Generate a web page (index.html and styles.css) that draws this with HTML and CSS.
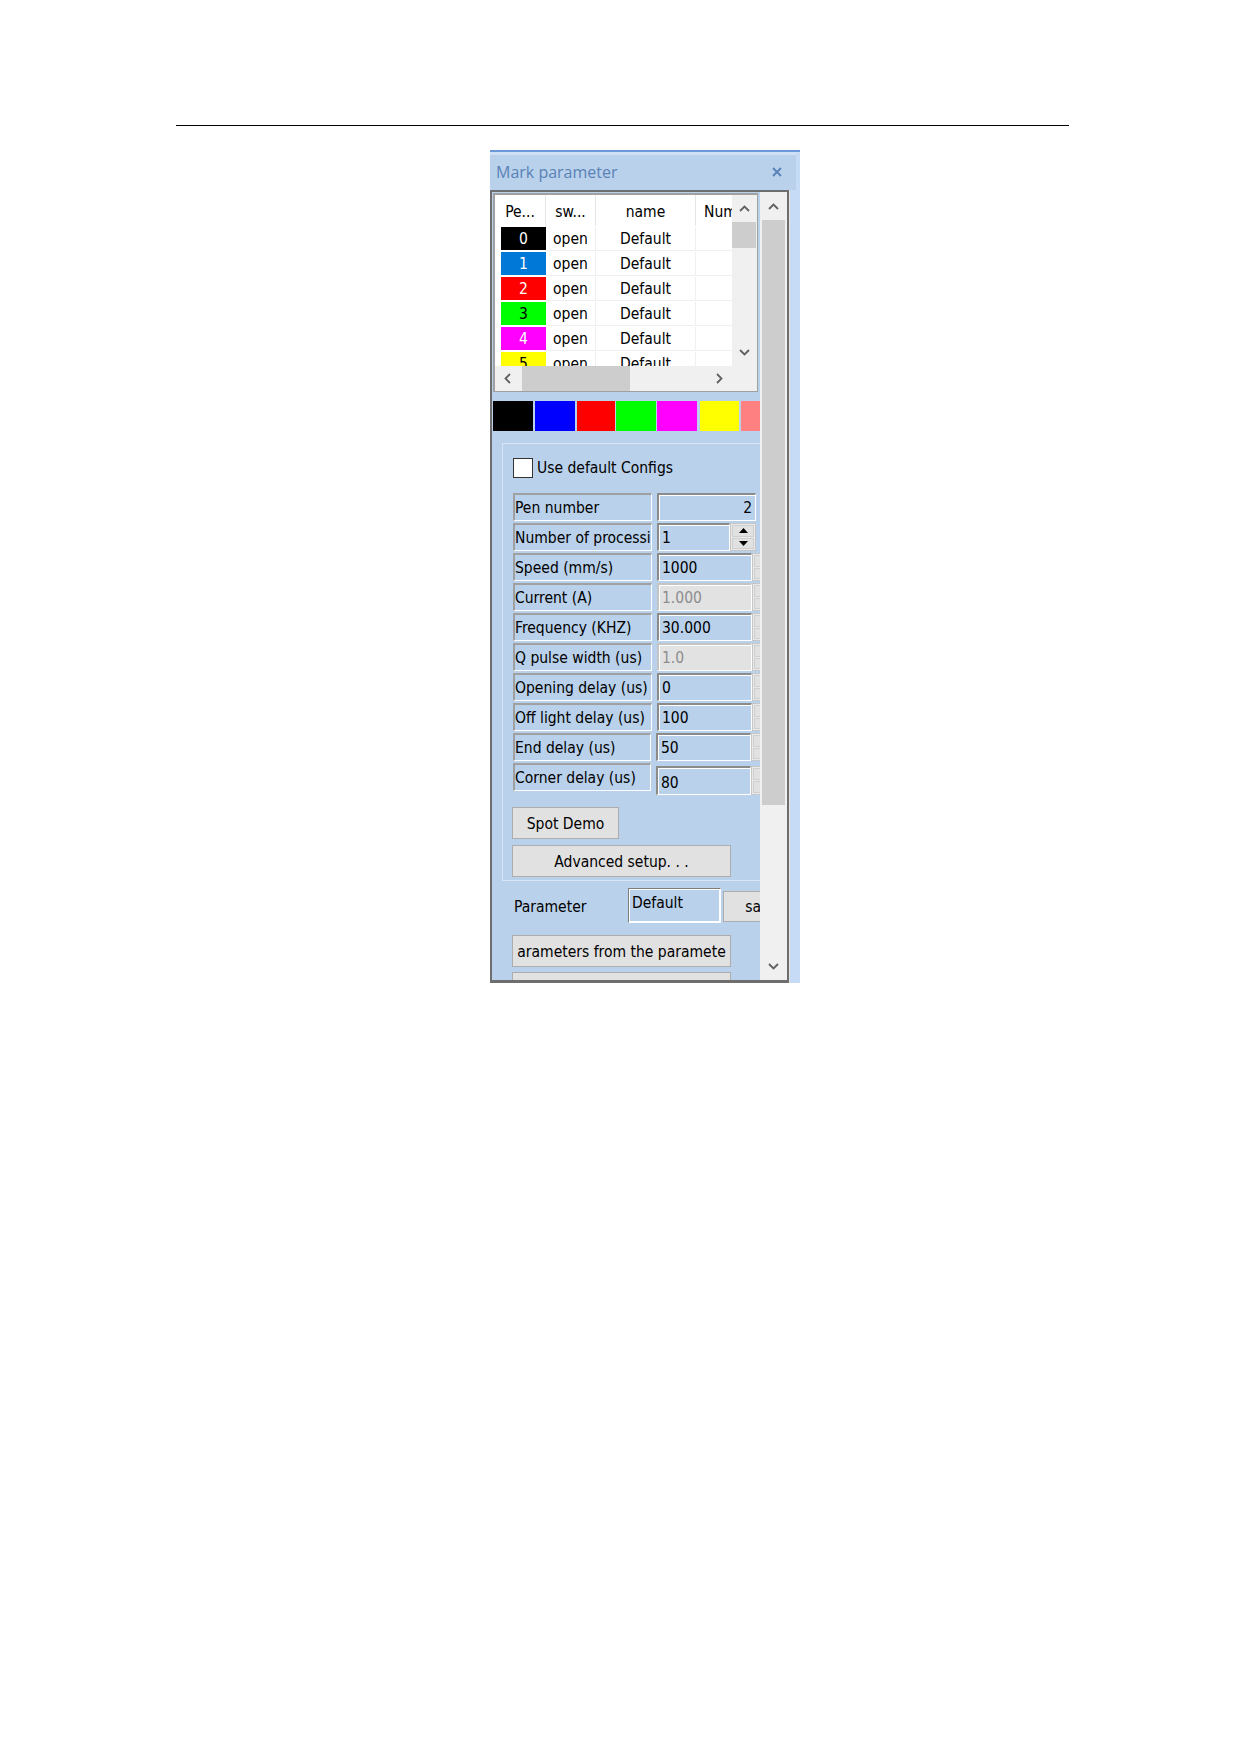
FILE: index.html
```html
<!DOCTYPE html>
<html>
<head>
<meta charset="utf-8">
<title>Mark parameter</title>
<link rel="stylesheet" href="styles.css">
</head>
<body>
<div class="rule"></div>
<div class="win">
  <div class="win-top"></div>
  <div class="title">
    <span class="title-text">Mark parameter</span>
    <svg class="close" width="10" height="10" viewBox="0 0 10 10"><path d="M1 1L9 9M9 1L1 9" stroke="#5b84ba" stroke-width="2" fill="none"/></svg>
  </div>
  <div class="main">
    <div class="panel">
      <div class="content">
        <div class="list">
          <div class="list-top">
            <div class="cols">
              <div class="lrow head">
                <div class="c hc1">Pe...</div><div class="c c2">sw...</div><div class="c c3">name</div><div class="c c4">Num</div>
              </div>
              <div class="lrow"><div class="c c1"><span class="pen p0">0</span></div><div class="c c2">open</div><div class="c c3">Default</div><div class="c c4"></div></div>
              <div class="lrow"><div class="c c1"><span class="pen p1">1</span></div><div class="c c2">open</div><div class="c c3">Default</div><div class="c c4"></div></div>
              <div class="lrow"><div class="c c1"><span class="pen p2">2</span></div><div class="c c2">open</div><div class="c c3">Default</div><div class="c c4"></div></div>
              <div class="lrow"><div class="c c1"><span class="pen p3">3</span></div><div class="c c2">open</div><div class="c c3">Default</div><div class="c c4"></div></div>
              <div class="lrow"><div class="c c1"><span class="pen p4">4</span></div><div class="c c2">open</div><div class="c c3">Default</div><div class="c c4"></div></div>
              <div class="lrow"><div class="c c1"><span class="pen p5">5</span></div><div class="c c2">open</div><div class="c c3">Default</div><div class="c c4"></div></div>
            </div>
            <div class="lvs">
              <div class="arrow up"><svg width="11" height="7" viewBox="0 0 11 7"><path d="M1 6L5.5 1.5L10 6" fill="none" stroke="#606060" stroke-width="1.8"/></svg></div>
              <div class="thumb"></div>
              <div class="track"></div>
              <div class="arrow down"><svg width="11" height="7" viewBox="0 0 11 7"><path d="M1 1L5.5 5.5L10 1" fill="none" stroke="#606060" stroke-width="1.8"/></svg></div>
            </div>
          </div>
          <div class="lhs">
            <div class="arrow"><svg width="7" height="11" viewBox="0 0 7 11"><path d="M6 1L1.5 5.5L6 10" fill="none" stroke="#606060" stroke-width="1.8"/></svg></div>
            <div class="thumb"></div>
            <div class="track"></div>
            <div class="arrow"><svg width="7" height="11" viewBox="0 0 7 11"><path d="M1 1L5.5 5.5L1 10" fill="none" stroke="#606060" stroke-width="1.8"/></svg></div>
            <div class="corner"></div>
          </div>
        </div>

        <div class="swatches">
          <div class="sw s-black"></div>
          <div class="sw s-blue"></div>
          <div class="sw s-red"></div>
          <div class="sw s-green"></div>
          <div class="sw s-magenta"></div>
          <div class="sw s-yellow"></div>
          <div class="sw s-salmon"></div>
        </div>

        <div class="group">
          <div class="check"><span class="box"></span><span>Use default Configs</span></div>
          <div class="fields">
            <div class="frow">
              <div class="flabel">Pen number</div>
              <div class="fval"><div class="field full">2</div></div>
            </div>
            <div class="frow">
              <div class="flabel">Number of processi</div>
              <div class="fval"><div class="field short">1</div>
                <div class="spin"><div class="sb"><svg width="9" height="5" viewBox="0 0 9 5"><path d="M0 5L4.5 0L9 5Z" fill="#000"/></svg></div><div class="sb"><svg width="9" height="5" viewBox="0 0 9 5"><path d="M0 0L4.5 5L9 0Z" fill="#000"/></svg></div></div>
              </div>
            </div>
            <div class="frow">
              <div class="flabel">Speed (mm/s)</div>
              <div class="fval"><div class="field">1000</div><div class="spin"><div class="sb"></div><div class="sb"></div></div></div>
            </div>
            <div class="frow">
              <div class="flabel">Current (A)</div>
              <div class="fval"><div class="field dis">1.000</div><div class="spin"><div class="sb"></div><div class="sb"></div></div></div>
            </div>
            <div class="frow">
              <div class="flabel">Frequency (KHZ)</div>
              <div class="fval"><div class="field">30.000</div><div class="spin"><div class="sb"></div><div class="sb"></div></div></div>
            </div>
            <div class="frow">
              <div class="flabel">Q pulse width (us)</div>
              <div class="fval"><div class="field dis">1.0</div><div class="spin"><div class="sb"></div><div class="sb"></div></div></div>
            </div>
            <div class="frow">
              <div class="flabel">Opening delay (us)</div>
              <div class="fval"><div class="field">0</div><div class="spin"><div class="sb"></div><div class="sb"></div></div></div>
            </div>
            <div class="frow">
              <div class="flabel">Off light delay (us)</div>
              <div class="fval"><div class="field">100</div><div class="spin"><div class="sb"></div><div class="sb"></div></div></div>
            </div>
            <div class="frow">
              <div class="flabel narrow">End delay (us)</div>
              <div class="fval"><div class="field">50</div><div class="spin"><div class="sb"></div><div class="sb"></div></div></div>
            </div>
            <div class="frow corner-row">
              <div class="flabel narrow">Corner delay (us)</div>
              <div class="fval"><div class="field">80</div><div class="spin"><div class="sb"></div><div class="sb"></div></div></div>
            </div>
          </div>
          <div class="btn spot">Spot Demo</div>
          <div class="btn adv">Advanced setup. . .</div>
        </div>

        <div class="param-row">
          <span class="plabel">Parameter</span>
          <div class="pfield">Default</div>
          <div class="btn save">save</div>
        </div>
        <div class="btn wide load">arameters from the paramete</div>
        <div class="btn wide next"></div>
      </div>
      <div class="vs">
        <div class="arrow"><svg width="11" height="7" viewBox="0 0 11 7"><path d="M1 6L5.5 1.5L10 6" fill="none" stroke="#606060" stroke-width="1.8"/></svg></div>
        <div class="thumb"></div>
        <div class="track"></div>
        <div class="arrow"><svg width="11" height="7" viewBox="0 0 11 7"><path d="M1 1L5.5 5.5L10 1" fill="none" stroke="#606060" stroke-width="1.8"/></svg></div>
      </div>
    </div>
    <div class="strip"></div>
  </div>
</div>
</body>
</html>
```

FILE: styles.css
```css
* { box-sizing: border-box; }

body {
  margin: 0;
  background: #fff;
  font-family: "DejaVu Sans Condensed", "Liberation Sans", sans-serif;
  font-size: 15.5px;
  color: #000;
}

.rule {
  margin: 125px 0 0 176px;
  width: 893px;
  height: 1px;
  background: #000;
}

.win {
  margin: 24px 0 0 490px;
  width: 310px;
}

.win-top {
  height: 2px;
  background: #6a9bd8;
}

.title {
  height: 38px;
  border-top: 3px solid #cfe0f5;
  border-right: 4px solid #c6dbf5;
  background: #b9d1ea;
  display: flex;
  align-items: center;
  justify-content: space-between;
  padding: 0 14px 2px 6px;
}

.title-text {
  font-family: "Open Sans", "Liberation Sans", sans-serif;
  font-size: 16px;
  color: #5a82b8;
}

.close { display: block; }

.main {
  display: flex;
  height: 793px;
}

.panel {
  width: 299px;
  flex: none;
  border: 2px solid #6e6e6e;
  border-bottom-width: 3px;
  background: #b9d1ea;
  display: flex;
}

.strip {
  flex: 1;
  background: #c6dbf5;
  border-left: 1px solid #e4e4e4;
}

.content {
  width: 268px;
  flex: none;
  overflow: hidden;
  padding: 1px 0 0 1px;
}

/* panel scrollbar */
.vs {
  width: 27px;
  flex: none;
  background: #f0f0f0;
  display: flex;
  flex-direction: column;
}
.vs .arrow {
  height: 28px;
  flex: none;
  display: flex;
  align-items: center;
  justify-content: center;
}
.vs .thumb {
  height: 585px;
  flex: none;
  margin: 0 2px;
  background: #cdcdcd;
}
.vs .track { flex: 1; }

/* list */
.list {
  width: 265px;
  height: 199px;
  border-style: solid;
  border-color: #a0a0a0;
  border-width: 2px 1px 1px 2px;
  background: #fff;
}
.list-top {
  display: flex;
  height: 171px;
}
.cols {
  width: 237px;
  flex: none;
  overflow: hidden;
}
.lrow {
  display: flex;
  height: 25px;
  padding-top: 1px;
}
.lrow.head { height: 31px; padding-top: 0; }

.c {
  flex: none;
  display: flex;
  align-items: center;
  border-right: 1px solid #f0f0f0;
  border-bottom: 1px solid #f0f0f0;
  white-space: nowrap;
  overflow: hidden;
}
.head .c {
  border-bottom: none;
  border-right-color: #e5e5e5;
  justify-content: center;
  padding-top: 2px;
}
.hc1 { width: 51px; }
.c1 { width: 51px; }
.c2 { width: 50px; padding-left: 7px; }
.c3 { width: 100px; justify-content: center; }
.c4 { width: 60px; }
.head .c2 { padding-left: 0; }
.head .c4 { justify-content: flex-start; padding-left: 8px; }

.lrow .c1 {
  padding-left: 6px;
  border: none;
  align-items: stretch;
}
.pen {
  flex: 1;
  margin-bottom: 1px;
  display: flex;
  align-items: center;
  justify-content: center;
  color: #fff;
}
.p0 { background: #000; }
.p1 { background: #0078d7; }
.p2 { background: #ff0000; }
.p3 { background: #00ff00; color: #000; }
.p4 { background: #ff00ff; }
.p5 { background: #ffff00; color: #000; }

.lvs {
  width: 25px;
  flex: none;
  background: #f0f0f0;
  display: flex;
  flex-direction: column;
}
.lvs .arrow {
  height: 27px;
  flex: none;
  display: flex;
  align-items: center;
  justify-content: center;
}
.lvs .arrow.down { height: 28px; }
.lvs .thumb {
  height: 26px;
  flex: none;
  margin-right: 1px;
  background: #cdcdcd;
}
.lvs .track { flex: 1; }

.lhs {
  display: flex;
  height: 25px;
  background: #f0f0f0;
}
.lhs .arrow {
  width: 25px;
  flex: none;
  display: flex;
  align-items: center;
  justify-content: center;
}
.lhs .thumb {
  width: 108px;
  flex: none;
  margin-left: 2px;
  background: #cdcdcd;
}
.lhs .track { flex: 1; }
.lhs .corner { width: 25px; flex: none; }

/* colour swatches */
.swatches {
  display: flex;
  height: 30px;
  margin-top: 9px;
}
.sw { flex: none; height: 30px; }
.s-black { width: 40px; background: #000; }
.s-blue { width: 40px; margin-left: 2px; background: #0000ff; }
.s-red { width: 38px; margin-left: 2px; background: #ff0000; }
.s-green { width: 40px; margin-left: 1px; background: #00ff00; }
.s-magenta { width: 40px; margin-left: 1px; background: #ff00ff; }
.s-yellow { width: 39px; margin-left: 3px; background: #ffff00; }
.s-salmon { width: 40px; margin-left: 2px; background: #ff8080; }

/* group box */
.group {
  margin: 12px 0 0 9px;
  width: 290px;
  border: 1px solid #d9e5f3;
  border-right: none;
  padding: 14px 0 3px 10px;
}

.check {
  display: flex;
  align-items: center;
  height: 20px;
  gap: 4px;
}
.box {
  width: 20px;
  height: 20px;
  border: 1px solid #333;
  background: #fff;
}

.fields {
  margin-top: 15px;
  display: flex;
  flex-direction: column;
  gap: 2px;
}
.frow {
  display: flex;
  height: 28px;
}
.flabel {
  width: 139px;
  flex: none;
  border-style: solid;
  border-width: 2px 1px 1px 2px;
  border-color: #a0a0a0 #fff #fff #a0a0a0;
  display: flex;
  align-items: center;
  white-space: nowrap;
  overflow: hidden;
}
.flabel.narrow { width: 138px; }

.fval {
  margin-left: 5px;
  display: flex;
  flex: none;
}
.field {
  width: 95px;
  flex: none;
  border-style: solid;
  border-width: 2px 1px 1px 2px;
  border-color: #8b8b8b #fff #fff #8b8b8b;
  box-shadow: inset 1px 1px 0 #fff;
  display: flex;
  align-items: center;
  padding-left: 3px;
  white-space: nowrap;
}
.field.full {
  width: 99px;
  justify-content: flex-end;
  padding-right: 3px;
}
.field.short { width: 73px; }
.field.dis {
  background: #e2e2e2;
  color: #8d8d8d;
  border-color: #c4c4c4 #fff #fff #c4c4c4;
}

.spin {
  width: 26px;
  flex: none;
  background: #e9e9e9;
  border: 1px solid #c6c6c6;
  padding: 1px;
  display: flex;
  flex-direction: column;
  gap: 1px;
}
.sb {
  flex: 1;
  background: #e1e1e1;
  border: 1px solid #cfcfcf;
  display: flex;
  align-items: center;
  justify-content: center;
}
.sb svg { display: block; }

.corner-row .field,
.corner-row .spin {
  margin-top: 3px;
  height: 29px;
}
.corner-row .field { padding-top: 3px; }

/* buttons */
.btn {
  background: #e1e1e1;
  border: 1px solid #adadad;
  display: flex;
  align-items: center;
  justify-content: center;
  white-space: nowrap;
  overflow: hidden;
  flex: none;
}
.spot {
  width: 107px;
  height: 32px;
  margin: 16px 0 0 -1px;
  padding-top: 2px;
}
.adv {
  width: 219px;
  height: 32px;
  margin: 6px 0 0 -1px;
  padding-top: 2px;
}

.param-row {
  display: flex;
  margin: 7px 0 0 21px;
  height: 35px;
}
.plabel {
  width: 114px;
  flex: none;
  display: flex;
  align-items: center;
  padding-top: 2px;
}
.pfield {
  width: 93px;
  flex: none;
  border-style: solid;
  border-width: 1px;
  border-color: #7d7d7d #fff #fff #7d7d7d;
  box-shadow: inset 1px 1px 0 #fff, inset -1px -1px 0 #fff;
  padding: 5px 0 0 3px;
  line-height: 18px;
}
.save {
  width: 77px;
  height: 31px;
  margin: 3px 0 0 2px;
}

.wide {
  width: 219px;
  height: 32px;
  margin-left: 19px;
  padding-top: 2px;
}
.load { margin-top: 12px; }
.next { margin-top: 5px; }
```
